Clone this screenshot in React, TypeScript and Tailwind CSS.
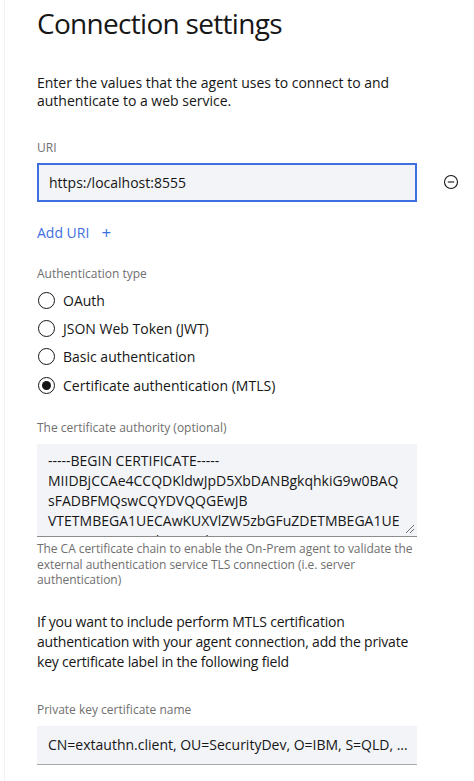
import { useState } from "react";

const authOptions = [
	{ id: "oauth", label: "OAuth" },
	{ id: "jwt", label: "JSON Web Token (JWT)" },
	{ id: "basic", label: "Basic authentication" },
	{ id: "mtls", label: "Certificate authentication (MTLS)" },
] as const;

const certText = `-----BEGIN CERTIFICATE-----
MIIDBjCCAe4CCQDKldwJpD5XbDANBgkqhkiG9w0BAQ
sFADBFMQswCQYDVQQGEwJB
VTETMBEGA1UECAwKUXVlZW5zbGFuZDETMBEGA1UE
BwwKQ29sZ29QbGQ5cdBEMMAsC`;

function Radio({ checked }: { checked: boolean }) {
	return (
		<span className="flex size-[17px] items-center justify-center rounded-full border border-[#161616]">
			{checked ? <span className="size-[9px] rounded-full bg-[#161616]" /> : null}
		</span>
	);
}

export default function App() {
	const [auth, setAuth] = useState<string>("mtls");

	return (
		<div
			className="min-h-[781px] w-[474px] bg-white"
			style={{ fontFamily: '"Open Sans", "Noto Sans", sans-serif' }}
		>
			<div className="ml-[4px] min-h-[781px] border-l border-[#f2f2f2] pr-[57px] pl-[32px] text-[#161616]">
				<h1 className="pt-[3px] text-[28px] leading-[40px] tracking-[-0.7px]">Connection settings</h1>

				<p className="mt-[31px] text-[14px] leading-[18px]">
					Enter the values that the agent uses to connect to and authenticate to a web service.
				</p>

				<div className="mt-[30px] text-[12px] leading-4 text-[#6f6f6f]">URI</div>
				<div className="relative mt-[7px]">
					<div className="flex h-[39px] items-center border-2 border-[#3e6fe0] bg-[#f2f4f8] px-[10px] text-[14px]">
						https:/localhost:8555
					</div>
					<svg
						className="absolute top-[11px] -right-[42px]"
						width="16"
						height="16"
						viewBox="0 0 16 16"
						fill="none"
						stroke="#161616"
						strokeWidth="1.1"
					>
						<circle cx="8" cy="8" r="6.5" />
						<line x1="4.8" y1="8" x2="11.2" y2="8" />
					</svg>
				</div>

				<div className="mt-[21px] flex items-center gap-[12px] text-[14px] leading-5 text-[#3e6fe0]">
					<span>Add URI</span>
					<span className="text-[17px]">+</span>
				</div>

				<div className="mt-[23px] text-[12px] leading-4 text-[#6f6f6f]">Authentication type</div>
				<div className="mt-[4px] flex flex-col">
					{authOptions.map((opt) => (
						<button
							key={opt.id}
							type="button"
							onClick={() => setAuth(opt.id)}
							className="flex h-[28.3px] items-center gap-[8px] pl-[1px] text-left text-[14px]"
						>
							<Radio checked={auth === opt.id} />
							<span>{opt.label}</span>
						</button>
					))}
				</div>

				<div className="mt-[21px] text-[12px] leading-4 text-[#6f6f6f]">
					The certificate authority (optional)
				</div>
				<div className="relative mt-[8px]">
					<div className="h-[93px] overflow-hidden border-b border-[#8d8d8d] bg-[#f2f4f8] px-[11px] pt-[7px] pb-[4px]">
						<pre
							className="text-[14px] leading-[20px] whitespace-pre-wrap"
							style={{ fontFamily: '"Open Sans", "Noto Sans", sans-serif' }}
						>
							{certText}
						</pre>
					</div>
					<svg className="absolute right-[2px] bottom-[3px]" width="10" height="10" viewBox="0 0 10 10" stroke="#6f6f6f" strokeWidth="1">
						<line x1="1" y1="9" x2="9" y2="1" />
						<line x1="5" y1="9" x2="9" y2="5" />
					</svg>
				</div>
				<p className="mt-[4px] -mr-[2px] text-[12px] leading-[15.5px] tracking-[-0.05px] text-[#6f6f6f]">
					The CA certificate chain to enable the On-Prem agent to validate the external authentication service TLS
					connection (i.e. server authentication)
				</p>

				<p className="mt-[24px] text-[14px] leading-[20px] tracking-[-0.2px]">
					If you want to include perform MTLS certification authentication with your agent connection, add the private
					key certificate label in the following field
				</p>

				<div className="mt-[30px] text-[12px] leading-4 text-[#6f6f6f]">Private key certificate name</div>
				<div className="mt-[8px] flex h-[39px] items-center overflow-hidden border-b border-[#a8a8a8] bg-[#f2f4f8] px-[11px] text-[14px] whitespace-nowrap">
					CN=extauthn.client, OU=SecurityDev, O=IBM, S=QLD, ...
				</div>
			</div>
		</div>
	);
}
